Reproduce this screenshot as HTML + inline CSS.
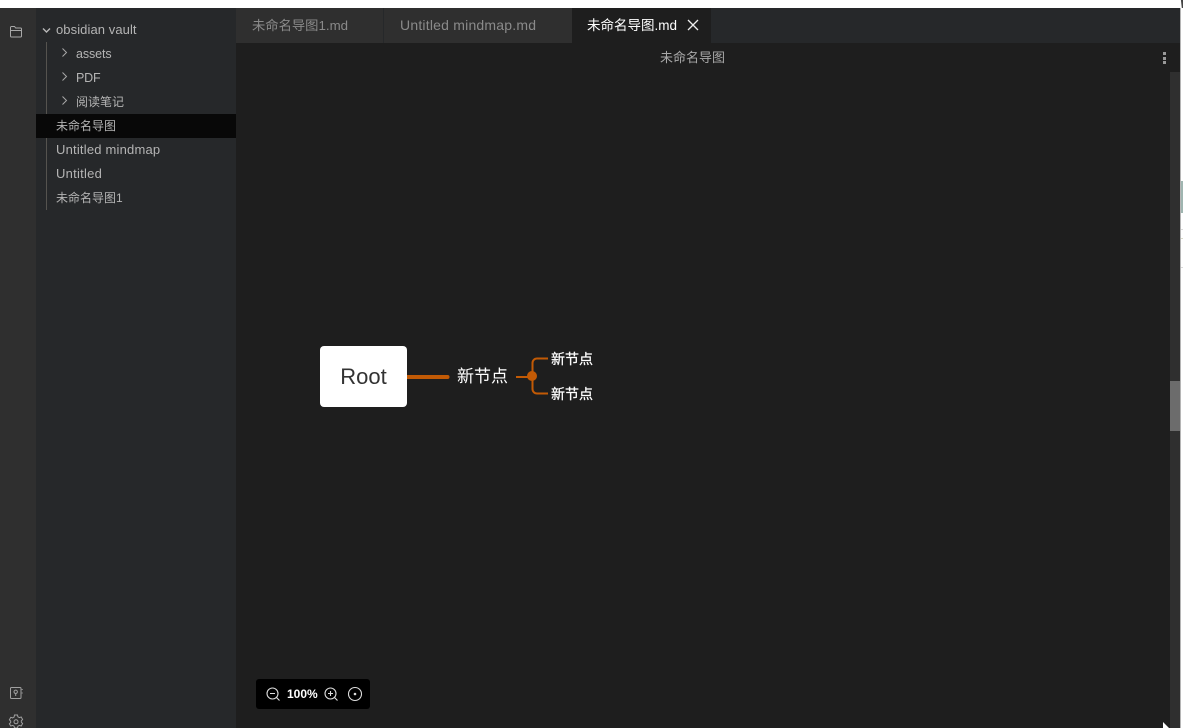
<!DOCTYPE html>
<html><head><meta charset="utf-8">
<style>
html,body{margin:0;padding:0;background:#fff;overflow:hidden}
body{width:1183px;height:728px;position:relative;font-family:"Liberation Sans","Noto Sans CJK SC",sans-serif}
div{position:absolute;box-sizing:border-box}
.t{white-space:nowrap;line-height:24px;height:24px;font-size:13px;color:#b4b4b4}
.tab{top:8px;height:35px;line-height:35px;font-size:14px;white-space:nowrap;background:#2f2f2f;color:#8a8a8a}
svg{position:absolute;overflow:visible}
</style></head><body>
<div style="left:0;top:8px;width:36px;height:720px;background:#2f2f2f"></div>
<div style="left:36px;top:8px;width:200px;height:720px;background:#26282a"></div>
<div style="left:236px;top:8px;width:944px;height:35px;background:#26282a"></div>
<div style="left:236px;top:43px;width:944px;height:685px;background:#1e1e1e"></div>
<div style="left:1180px;top:8px;width:1px;height:720px;background:#b5b5b5"></div>
<div style="left:1181px;top:181px;width:2px;height:32px;background:#9fb5b0"></div>
<div style="left:1181px;top:229px;width:2px;height:1px;background:#d8d8d8"></div>
<div style="left:1181px;top:238px;width:2px;height:1px;background:#d8d8c8"></div>
<div style="left:1181px;top:267px;width:2px;height:1px;background:#d8d8d8"></div>

<svg style="left:9px;top:25px" width="14" height="13" viewBox="0 0 14 13" fill="none" stroke="#a8a8a8" stroke-width="1"><path d="M1.5 11V2.5a1 1 0 0 1 1-1h3l1.2 1.500h4.800a1 1 0 0 1 1 1V11a1 1 0 0 1-1 1h-9a1 1 0 0 1-1-1zM1.500 5.500h11"/></svg>
<svg style="left:9px;top:686px" width="14" height="14" viewBox="0 0 14 14" fill="none" stroke="#a0a0a0" stroke-width="1"><rect x="1.500" y="1.500" width="10.500" height="11" rx="1"/><circle cx="6.700" cy="5.800" r="1.700"/><path d="M6.700 7.500v2.500M13.200 3v1M13.200 6.500v1"/></svg>
<svg style="left:9px;top:714px" width="14" height="14" viewBox="0 0 14 14" fill="none" stroke="#a0a0a0" stroke-width="1"><path d="M5.500 1h3l.4 1.800 1.500.8 1.800-.6 1.400 2.500-1.300 1.300v1.400l1.300 1.300-1.400 2.500-1.800-.6-1.500.8-.4 1.800h-3l-.4-1.800-1.500-.8-1.800.6L.4 9.800l1.300-1.300V7.100L.4 5.800 1.800 3.300l1.800.6 1.500-.8z"/><circle cx="7" cy="7.800" r="2"/></svg>

<svg style="left:42px;top:27px" width="9" height="7" viewBox="0 0 9 7" fill="none" stroke="#b8b8b8" stroke-width="1.400"><path d="M1 1.500l3.500 3.500L8 1.500"/></svg>
<div class="t" style="left:56px;top:18px;letter-spacing:.08px">obsidian vault</div>
<div style="left:46px;top:42px;width:1px;height:168px;background:#55534f"></div>
<svg style="left:61px;top:48px" width="7" height="10" viewBox="0 0 7 10" fill="none" stroke="#a8a8a8" stroke-width="1"><path d="M1.500 .5l4 4-4 4"/></svg>
<div class="t" style="left:76px;top:42px;font-size:12.500px;letter-spacing:-.1px">assets</div>
<svg style="left:61px;top:72px" width="7" height="10" viewBox="0 0 7 10" fill="none" stroke="#a8a8a8" stroke-width="1"><path d="M1.500 .5l4 4-4 4"/></svg>
<div class="t" style="left:76px;top:66px;font-size:12.500px;letter-spacing:-.2px">PDF</div>
<svg style="left:61px;top:96px" width="7" height="10" viewBox="0 0 7 10" fill="none" stroke="#a8a8a8" stroke-width="1"><path d="M1.500 .5l4 4-4 4"/></svg>
<div class="t" style="left:76px;top:90px;font-size:12px">阅读笔记</div>
<div style="left:36px;top:114px;width:200px;height:24px;background:#080808"></div>
<div class="t" style="left:56px;top:114px;font-size:12px">未命名导图</div>
<div class="t" style="left:56px;top:138px;letter-spacing:.2px">Untitled mindmap</div>
<div class="t" style="left:56px;top:162px;letter-spacing:.25px">Untitled</div>
<div class="t" style="left:56px;top:186px;font-size:12px">未命名导图1</div>

<div class="tab" style="left:236px;width:147px;padding-left:16px;font-size:13.300px">未命名导图1.md</div>
<div class="tab" style="left:384px;width:188px;padding-left:16px;letter-spacing:.21px">Untitled mindmap.md</div>
<div class="tab" style="left:572px;width:139px;padding-left:15px;background:#1e1e1e;color:#fff;font-size:13.500px">未命名导图.md</div>
<svg style="left:687px;top:19px" width="12" height="12" viewBox="0 0 12 12" fill="none" stroke="#eee" stroke-width="1.300"><path d="M1 1l10 10M11 1L1 11"/></svg>

<div style="left:660px;top:46px;font-size:13px;line-height:24px;color:#a8a8a8;white-space:nowrap">未命名导图</div>
<div style="left:1163px;top:52px;width:3px;height:3px;background:#999;box-shadow:0 5px 0 #999,0 9px 0 #999"></div>

<div style="left:1170px;top:72px;width:10px;height:656px;background:#2f2f2f"></div>
<div style="left:1170px;top:381px;width:10px;height:50px;background:#6c6c6c"></div>

<svg style="left:0;top:0" width="1183" height="728" fill="none" stroke="#c25a05">
<path d="M407 377H447" stroke-width="4"/>
<path d="M447 377h.5" stroke-width="4" stroke-linecap="round"/>
<path d="M516 377H532" stroke-width="2"/>
<path d="M548 358.500H537a4.500 4.500 0 0 0-4.500 4.500V389a4.500 4.500 0 0 0 4.500 4.500H548" stroke-width="2"/>
<circle cx="532" cy="376" r="5" fill="#c25a05" stroke="none"/>
</svg>
<div style="left:320px;top:346px;width:87px;height:61px;background:#fff;border-radius:4px;color:#333;font-size:22px;line-height:61px;text-align:center">Root</div>
<div style="left:457px;top:365px;font-size:17px;line-height:24px;color:#fff;white-space:nowrap">新节点</div>
<div style="left:551px;top:349px;font-size:14px;line-height:20px;color:#fff;white-space:nowrap;-webkit-text-stroke:.25px #fff">新节点</div>
<div style="left:551px;top:384px;font-size:14px;line-height:20px;color:#fff;white-space:nowrap;-webkit-text-stroke:.25px #fff">新节点</div>

<div style="left:256px;top:679px;width:114px;height:30px;background:#000;border-radius:3px"></div>
<svg style="left:266px;top:687px" width="15" height="15" viewBox="0 0 15 15" fill="none" stroke="#ddd" stroke-width="1.100"><circle cx="6.500" cy="6.500" r="5.500"/><path d="M4 6.500h5M10.500 10.500l3 3"/></svg>
<div style="left:287px;top:684px;font-size:12px;font-weight:bold;line-height:20px;color:#fff;white-space:nowrap">100%</div>
<svg style="left:324px;top:687px" width="15" height="15" viewBox="0 0 15 15" fill="none" stroke="#ddd" stroke-width="1.100"><circle cx="6.500" cy="6.500" r="5.500"/><path d="M4 6.500h5M6.500 4v5M10.500 10.500l3 3"/></svg>
<svg style="left:348px;top:687px" width="14" height="14" viewBox="0 0 14 14" fill="none" stroke="#ddd" stroke-width="1.100"><circle cx="7" cy="7" r="6.500"/><circle cx="7" cy="7" r="1.300" fill="#ddd" stroke="none"/></svg>

<svg style="left:1162px;top:722px" width="8" height="6" viewBox="0 0 8 6"><path d="M1 0L7 6H1z" fill="#fff"/></svg>
<div style="left:1180px;top:0;width:3px;height:8px;background:#444;clip-path:polygon(30% 0,100% 0,100% 100%,60% 100%)"></div>
</body></html>
